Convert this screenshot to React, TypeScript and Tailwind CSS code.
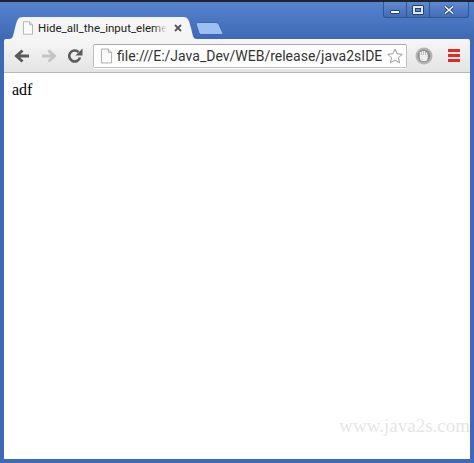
import React from 'react';

const sans = { fontFamily: 'Roboto, "Noto Sans", sans-serif' };

const PageIcon = ({ className }: { className: string }) => (
  <svg viewBox="0 0 14 17" className={className}>
    <path d="M1.5 1h7.5l3.5 3.5v11.5h-11z" fill="#fbfbfb" stroke="#a8a8a8" />
    <path d="M9 1v3.5h3.5" fill="#e4e4e4" stroke="#a8a8a8" />
  </svg>
);

const WindowControls = () => (
  <div className="absolute right-[5px] top-[2px] flex h-[16px] w-[86px] rounded-b-[3px] border border-t-0 border-[#2f5595] bg-gradient-to-b from-[#5f8ad0] to-[#436db8]">
    <div className="flex w-[23px] items-end justify-center border-r border-[#2f5595] pb-[3px]">
      <div className="h-[4px] w-[10px] rounded-[1px] border border-[#26406f] bg-white" />
    </div>
    <div className="flex w-[23px] items-center justify-center border-r border-[#2f5595]">
      <div className="flex h-[10px] w-[12px] items-center justify-center rounded-[1px] border border-[#26406f] bg-[#dfe8f6]">
        <div className="h-[4px] w-[6px] border border-[#26406f] bg-[#5f8ad0]" />
      </div>
    </div>
    <div className="flex flex-1 items-center justify-center">
      <svg viewBox="0 0 12 10" className="h-[10px] w-[12px]">
        <path d="M2 1.5l8 7M10 1.5l-8 7" stroke="#26406f" strokeWidth="3" />
        <path d="M2 1.5l8 7M10 1.5l-8 7" stroke="#fff" strokeWidth="1.6" />
      </svg>
    </div>
  </div>
);

const Tab = () => (
  <div className="flex h-[22px] items-stretch">
    <svg viewBox="0 0 14 22" className="h-[22px] w-[14px] shrink-0">
      <path d="M0 22c4 0 4-3 6-11 2-8 3-11 8-11v22z" fill="#f5f5f5" />
    </svg>
    <div className="flex w-[160px] items-center bg-[#f5f5f5]">
      <PageIcon className="-ml-[1px] h-[14px] w-[12px] shrink-0" />
      <div className="ml-[4px] relative w-[129px] overflow-hidden whitespace-nowrap text-[11.5px] leading-[22px] text-[#222]" style={sans}>
        Hide_all_the_input_elements
        <div className="absolute inset-y-0 right-0 w-[14px] bg-gradient-to-r from-transparent to-[#f5f5f5]" />
      </div>
      <svg viewBox="0 0 8 8" className="ml-[7px] h-[8px] w-[8px] shrink-0">
        <path d="M1 1l6 6M7 1l-6 6" stroke="#555" strokeWidth="1.8" />
      </svg>
    </div>
    <svg viewBox="0 0 14 22" className="h-[22px] w-[14px] shrink-0">
      <path d="M0 0c5 0 6 3 8 11 2 8 2 11 6 11h-14z" fill="#f5f5f5" />
    </svg>
  </div>
);

const NewTab = () => (
  <svg viewBox="0 0 29 13" className="mb-[4px] -ml-[2px] h-[13px] w-[29px]">
    <path d="M1 2q0-1.500 2-1.500h18q2 0 3 2l4 9q.500 1-1 1h-21q-1.500 0-2-1.500z" fill="#9dc0f2" stroke="#3e68ae" />
  </svg>
);

const NavButtons = () => (
  <div className="flex items-center">
    <svg viewBox="0 0 16 14" className="ml-[10px] h-[14px] w-[16px]">
      <path d="M15 7h-11M8.500 1.500l-6 5.500 6 5.500" fill="none" stroke="#5a5a5a" strokeWidth="3" />
    </svg>
    <svg viewBox="0 0 16 14" className="ml-[11px] h-[14px] w-[16px]">
      <path d="M1 7h11M7.500 1.500l6 5.500-6 5.500" fill="none" stroke="#c4c4c4" strokeWidth="3" />
    </svg>
    <svg viewBox="0 0 16 16" className="ml-[10px] h-[16px] w-[16px]">
      <path d="M13 9.500a5.500 5.500 0 1 1-1.500-5.500" fill="none" stroke="#5a5a5a" strokeWidth="2.600" />
      <path d="M15.500 0.500v7h-7z" fill="#5a5a5a" />
    </svg>
  </div>
);

const AddressBar = () => (
  <div className="ml-[10px] flex h-[24px] w-[314px] items-center rounded-[2px] border border-[#bdbdbd] border-t-[#a8a8a8] bg-white shadow-[0_1px_0_#fff]">
    <PageIcon className="ml-[6px] h-[16px] w-[13px] shrink-0" />
    <div className="ml-[4px] w-[266px] overflow-hidden whitespace-nowrap text-[14px] leading-[22px] text-[#333]" style={sans}>
      file:///E:/Java_Dev/WEB/release/java2sIDE
    </div>
    <svg viewBox="0 0 16 16" className="ml-[4px] h-[16px] w-[16px] shrink-0">
      <path d="M8 1l2.100 4.800 5.200.500-3.900 3.400 1.200 5.100-4.600-2.700-4.600 2.700 1.200-5.100-3.900-3.400 5.200-.500z" fill="#fff" stroke="#9a9a9a" />
    </svg>
  </div>
);

const HandIcon = () => (
  <svg viewBox="0 0 18 18" className="ml-[8px] h-[18px] w-[18px]">
    <circle cx="9" cy="9" r="8.500" fill="#b5b5b5" />
    <circle cx="9" cy="9" r="6.500" fill="#8f8f8f" />
    <path d="M5.500 8v-3M7.500 8v-4M9.500 8v-4M11.500 8.500v-3M5.500 7.500v3q0 3 3 3h1q2.500 0 2.500-3v-3" stroke="#eee" strokeWidth="1.500" fill="none" />
    <path d="M6 8h6v3q0 2-2 2h-2q-2 0-2-2z" fill="#eee" />
  </svg>
);

const MenuIcon = () => (
  <div className="ml-[15px] flex w-[12px] flex-col gap-[2px]">
    <div className="h-[3px] bg-[#df2a25]" />
    <div className="h-[3px] bg-[#df2a25]" />
    <div className="h-[3px] bg-[#df2a25]" />
  </div>
);

export default function App() {
  return (
    <div className="relative flex h-[463px] w-[474px] flex-col overflow-hidden bg-[#3e69b6]">
      <div className="h-[2px] shrink-0 bg-[#1f2530]" />
      <div className="flex h-[37px] shrink-0 items-end bg-gradient-to-b from-[#5583ce] to-[#3f69b5] pl-[9px]">
        <Tab />
        <NewTab />
      </div>
      <WindowControls />
      <div className="mx-[4px] flex h-[34px] shrink-0 items-center rounded-t-[2px] border-b border-[#b8b8b8] bg-gradient-to-b from-[#f6f6f6] to-[#e4e4e4]">
        <NavButtons />
        <AddressBar />
        <HandIcon />
        <MenuIcon />
      </div>
      <div className="relative mx-[4px] mb-[4px] flex-1 overflow-hidden bg-white px-[8px] py-[8px] text-[16px] leading-[18px] text-black" style={{ fontFamily: '"Liberation Serif", serif' }}>
        adf
        <div className="absolute bottom-[21px] right-[0px] whitespace-nowrap text-[19px] leading-[24px] text-[#e6e6e6]">
          www.java2s.com
        </div>
      </div>
    </div>
  );
}
